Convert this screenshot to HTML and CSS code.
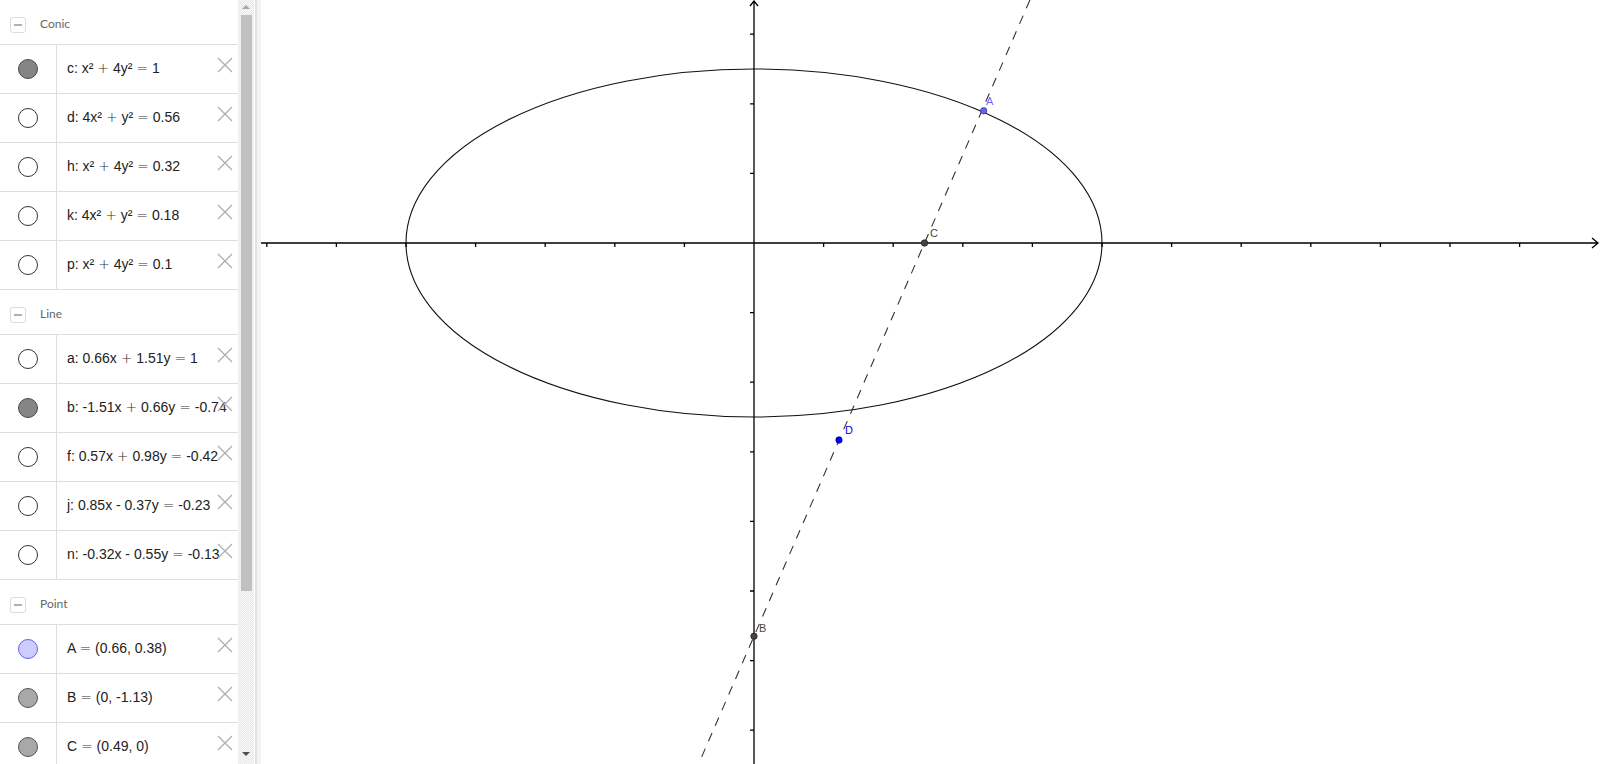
FILE: index.html
```html
<!DOCTYPE html>
<html>
<head>
<meta charset="utf-8">
<title>Algebra view</title>
<link rel="stylesheet" href="styles.css">
</head>
<body>
<div class="app">
  <div class="algebra">
    <div class="list">
      <div class="group-head"><span class="toggle"></span><span class="group-title">Conic</span></div>
      <div class="item"><div class="marker"><span class="dot dot-gray"></span></div><div class="formula">c: x² <span class="op">+</span> 4y² <span class="op">=</span> 1</div><span class="del"><svg width="16" height="16" viewBox="0 0 16 16"><path d="M1 1L15 15M15 1L1 15"/></svg></span></div>
      <div class="item"><div class="marker"><span class="dot"></span></div><div class="formula">d: 4x² <span class="op">+</span> y² <span class="op">=</span> 0.56</div><span class="del"><svg width="16" height="16" viewBox="0 0 16 16"><path d="M1 1L15 15M15 1L1 15"/></svg></span></div>
      <div class="item"><div class="marker"><span class="dot"></span></div><div class="formula">h: x² <span class="op">+</span> 4y² <span class="op">=</span> 0.32</div><span class="del"><svg width="16" height="16" viewBox="0 0 16 16"><path d="M1 1L15 15M15 1L1 15"/></svg></span></div>
      <div class="item"><div class="marker"><span class="dot"></span></div><div class="formula">k: 4x² <span class="op">+</span> y² <span class="op">=</span> 0.18</div><span class="del"><svg width="16" height="16" viewBox="0 0 16 16"><path d="M1 1L15 15M15 1L1 15"/></svg></span></div>
      <div class="item"><div class="marker"><span class="dot"></span></div><div class="formula">p: x² <span class="op">+</span> 4y² <span class="op">=</span> 0.1</div><span class="del"><svg width="16" height="16" viewBox="0 0 16 16"><path d="M1 1L15 15M15 1L1 15"/></svg></span></div>
      <div class="group-head"><span class="toggle"></span><span class="group-title">Line</span></div>
      <div class="item"><div class="marker"><span class="dot"></span></div><div class="formula">a: 0.66x <span class="op">+</span> 1.51y <span class="op">=</span> 1</div><span class="del"><svg width="16" height="16" viewBox="0 0 16 16"><path d="M1 1L15 15M15 1L1 15"/></svg></span></div>
      <div class="item"><div class="marker"><span class="dot dot-gray"></span></div><div class="formula">b: -1.51x <span class="op">+</span> 0.66y <span class="op">=</span> -0.74</div><span class="del"><svg width="16" height="16" viewBox="0 0 16 16"><path d="M1 1L15 15M15 1L1 15"/></svg></span></div>
      <div class="item"><div class="marker"><span class="dot"></span></div><div class="formula">f: 0.57x <span class="op">+</span> 0.98y <span class="op">=</span> -0.42</div><span class="del"><svg width="16" height="16" viewBox="0 0 16 16"><path d="M1 1L15 15M15 1L1 15"/></svg></span></div>
      <div class="item"><div class="marker"><span class="dot"></span></div><div class="formula">j: 0.85x - 0.37y <span class="op">=</span> -0.23</div><span class="del"><svg width="16" height="16" viewBox="0 0 16 16"><path d="M1 1L15 15M15 1L1 15"/></svg></span></div>
      <div class="item"><div class="marker"><span class="dot"></span></div><div class="formula">n: -0.32x - 0.55y <span class="op">=</span> -0.13</div><span class="del"><svg width="16" height="16" viewBox="0 0 16 16"><path d="M1 1L15 15M15 1L1 15"/></svg></span></div>
      <div class="group-head"><span class="toggle"></span><span class="group-title">Point</span></div>
      <div class="item"><div class="marker"><span class="dot dot-blue"></span></div><div class="formula">A <span class="op">=</span> (0.66, 0.38)</div><span class="del"><svg width="16" height="16" viewBox="0 0 16 16"><path d="M1 1L15 15M15 1L1 15"/></svg></span></div>
      <div class="item"><div class="marker"><span class="dot dot-light"></span></div><div class="formula">B <span class="op">=</span> (0, -1.13)</div><span class="del"><svg width="16" height="16" viewBox="0 0 16 16"><path d="M1 1L15 15M15 1L1 15"/></svg></span></div>
      <div class="item"><div class="marker"><span class="dot dot-light"></span></div><div class="formula">C <span class="op">=</span> (0.49, 0)</div><span class="del"><svg width="16" height="16" viewBox="0 0 16 16"><path d="M1 1L15 15M15 1L1 15"/></svg></span></div>
    </div>
    <div class="scrollbar">
      <div class="sb-up"><span class="arrow-up"></span></div>
      <div class="sb-thumb"></div>
      <div class="sb-track"></div>
      <div class="sb-down"><span class="arrow-down"></span></div>
    </div>
    <div class="divider"></div>
  </div>
  <div class="canvas">
    <svg class="graph" width="1339" height="764" viewBox="261 0 1339 764">
      <ellipse cx="754" cy="243" rx="348" ry="174" class="conic"/>
      <path class="axis" d="M261 243H1598M1592 238L1598 243L1592 248M754 764V1M750 6L754 1L758 6"/>
      <path class="axis" d="M266.8 243v4M336.4 243v4M406 243v4M475.6 243v4M545.2 243v4M614.8 243v4M684.4 243v4M823.6 243v4M893.2 243v4M962.8 243v4M1032.4 243v4M1102 243v4M1171.6 243v4M1241.2 243v4M1310.8 243v4M1380.4 243v4M1450 243v4M1519.6 243v4"/>
      <path class="axis" d="M754 34.2h-4M754 103.8h-4M754 173.4h-4M754 312.6h-4M754 382.2h-4M754 451.8h-4M754 521.4h-4M754 591h-4M754 660.6h-4M754 730.2h-4"/>
      <path class="dashed" d="M1029.9 0L698.6 764"/>
      <circle cx="983.7" cy="110.8" r="3.2" class="pt-a"/>
      <text x="986" y="105" class="lbl lbl-a">A</text>
      <circle cx="924.5" cy="243" r="3.2" class="pt-dark"/>
      <text x="930" y="237" class="lbl lbl-dark">C</text>
      <circle cx="839" cy="440" r="3.2" class="pt-d"/>
      <text x="845" y="434" class="lbl lbl-d">D</text>
      <circle cx="754" cy="636.2" r="3.2" class="pt-dark"/>
      <text x="759" y="632" class="lbl lbl-dark">B</text>
    </svg>
  </div>
</div>
</body>
</html>
```
FILE: styles.css
```css
html, body {
  margin: 0;
  padding: 0;
  background: #fff;
  overflow: hidden;
}

body {
  font-family: "Liberation Sans", Arial, sans-serif;
  color: #333;
}

.app {
  display: flex;
  width: 1600px;
  height: 764px;
}

.algebra {
  display: flex;
  flex: none;
  width: 261px;
  height: 764px;
}

.list {
  width: 238px;
  flex: none;
  overflow: hidden;
  background: #fff;
}

.group-head {
  display: flex;
  align-items: center;
  padding-top: 6px;
  height: 38px;
  border-bottom: 1px solid #dedede;
}

.toggle {
  position: relative;
  width: 14px;
  height: 14px;
  margin-left: 10px;
  border: 1px solid #dcdcdc;
  border-radius: 3px;
  flex: none;
}

.toggle::after {
  content: "";
  position: absolute;
  left: 3px;
  top: 6px;
  width: 8px;
  height: 2px;
  background: #b0b0b0;
}

.group-title {
  margin-left: 14px;
  margin-bottom: 4px;
  font-family: Lato, "Open Sans", sans-serif;
  font-size: 12px;
  color: #666;
}

.item {
  position: relative;
  display: flex;
  height: 48px;
  border-bottom: 1px solid #dedede;
}

.marker {
  flex: none;
  width: 56px;
  border-right: 1px solid #dedede;
  display: flex;
  align-items: center;
  justify-content: center;
}

.dot {
  width: 18px;
  height: 18px;
  border: 1px solid #333;
  border-radius: 50%;
  background: #fff;
}

.dot-gray {
  background: #858585;
  border-color: #4a4a4a;
}

.dot-light {
  background: #a8a8a8;
  border-color: #555;
}

.dot-blue {
  background: #ccccff;
  border-color: #6161f0;
}

.formula {
  padding-left: 10px;
  display: flex;
  align-items: center;
  gap: 0;
  padding-bottom: 3px;
  white-space: pre;
  font-size: 14px;
  color: #222;
}

.op {
  font-family: "DejaVu Sans", sans-serif;
  font-weight: 300;
  color: #333;
}

.del {
  position: absolute;
  right: 5px;
  top: 12px;
  width: 16px;
  height: 16px;
}

.del svg {
  display: block;
}

.del path {
  stroke: #b0b0b0;
  stroke-width: 1.4;
  fill: none;
}

.scrollbar {
  flex: none;
  width: 16px;
  display: flex;
  flex-direction: column;
  align-items: center;
  background: repeating-conic-gradient(#e9e9e9 0 25%, #f7f7f7 0 50%) 0 0 / 2px 2px;
}

.sb-up {
  height: 15px;
  width: 100%;
  display: flex;
  justify-content: center;
  padding-top: 5px;
  box-sizing: border-box;
}

.arrow-up {
  width: 0;
  height: 0;
  border-left: 4px solid transparent;
  border-right: 4px solid transparent;
  border-bottom: 4px solid #a8a8a8;
}

.sb-thumb {
  width: 11px;
  height: 576px;
  background: #c0c0c0;
}

.sb-track {
  flex: 1;
}

.sb-down {
  height: 20px;
  width: 100%;
  display: flex;
  justify-content: center;
  padding-top: 8px;
  box-sizing: border-box;
}

.arrow-down {
  width: 0;
  height: 0;
  border-left: 4px solid transparent;
  border-right: 4px solid transparent;
  border-top: 4px solid #505050;
}

.divider {
  flex: none;
  width: 7px;
  box-sizing: border-box;
  border-left: 1px solid #fff;
  box-shadow: inset 2px 0 0 #e2e2e2;
  background: repeating-conic-gradient(#ececec 0 25%, #f9f9f9 0 50%) 0 0 / 2px 2px;
}

.canvas {
  flex: 1;
  height: 764px;
  overflow: hidden;
}

.graph {
  display: block;
}

.conic {
  fill: none;
  stroke: #111;
  stroke-width: 1.1;
}

.axis {
  fill: none;
  stroke: #000;
  stroke-width: 1.3;
}

.dashed {
  fill: none;
  stroke: #333;
  stroke-width: 1.1;
  stroke-dasharray: 9 8;
}

.pt-a {
  fill: #6464e8;
  stroke: #3a3aa8;
  stroke-width: 0.8;
}

.pt-dark {
  fill: #444;
  stroke: #222;
  stroke-width: 0.8;
}

.pt-d {
  fill: #0000ff;
  stroke: #0000a0;
  stroke-width: 0.8;
}

.lbl {
  font-family: "Liberation Sans", Arial, sans-serif;
  font-size: 11px;
}

.lbl-a {
  fill: #6a6aff;
}

.lbl-dark {
  fill: #444;
}

.lbl-d {
  fill: #0000ff;
}
```
